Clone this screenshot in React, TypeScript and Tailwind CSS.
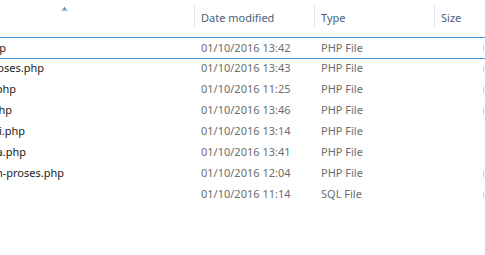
const rows = [
  { name: "index.php", end: "w-[6px]", date: "01/10/2016 13:42", type: "PHP File", size: true, focus: true },
  { name: "proses.php", end: "w-[44px]", date: "01/10/2016 13:43", type: "PHP File", size: true },
  { name: "edit.php", end: "w-[16px]", date: "01/10/2016 11:25", type: "PHP File", size: true },
  { name: "tambah.php", end: "w-[12px]", date: "01/10/2016 13:46", type: "PHP File", size: true },
  { name: "koneksi.php", end: "w-[25px]", date: "01/10/2016 13:14", type: "PHP File", size: false },
  { name: "data.php", end: "w-[26px]", date: "01/10/2016 13:41", type: "PHP File", size: false },
  { name: "tambah-proses.php", end: "w-[64px]", date: "01/10/2016 12:04", type: "PHP File", size: true },
  { name: "", end: "w-[0px]", date: "01/10/2016 11:14", type: "SQL File", size: true },
];

const SortArrow = () => (
  <svg width="7" height="4" viewBox="0 0 7 4" className="block">
    <defs>
      <linearGradient id="sortg" x1="0" y1="0" x2="0" y2="1">
        <stop offset="0" stopColor="#3f5f80" />
        <stop offset="1" stopColor="#a9d5f5" />
      </linearGradient>
    </defs>
    <path d="M3.5 0 L7 4 L0 4 Z" fill="url(#sortg)" />
  </svg>
);

const HeaderCell = ({ label, width }: { label: string; width: string }) => (
  <div className={`${width} flex h-full shrink-0 items-start`}>
    <div className="mt-[5px] h-[22px] w-px bg-[#e3e8ef]" />
    <span className="pl-[6px] pt-[11px] leading-[14px] text-[#4c607a]">{label}</span>
  </div>
);

export default function App() {
  return (
    <div className="h-[255px] w-[485px] overflow-hidden bg-white text-[11px] font-['Noto_Sans',sans-serif]">
      <div className="flex h-[37px]">
        <div className="relative w-[194px] shrink-0">
          <div className="absolute left-[61px] top-[7px]">
            <SortArrow />
          </div>
        </div>
        <HeaderCell label="Date modified" width="w-[120px]" />
        <HeaderCell label="Type" width="w-[120px]" />
        <HeaderCell label="Size" width="w-[51px]" />
      </div>
      <div className="flex flex-col">
        {rows.map((r, i) => (
          <div
            key={i}
            className={`flex items-center whitespace-nowrap ${
              r.focus ? "-mb-px h-[22px] border-y border-[#4a9be6]" : "h-[21px]"
            }`}
          >
            <div className="w-[195px] shrink-0">
              <div className={`${r.end} flex justify-end overflow-hidden text-[#1a1a1a]`}>
                <span>{r.name}</span>
              </div>
            </div>
            <div className="w-[120px] shrink-0 pl-[6px] text-[#6d6d6d]">{r.date}</div>
            <div className="w-[120px] shrink-0 pl-[6px] text-[#6d6d6d]">{r.type}</div>
            <div className="flex w-[50px] shrink-0 justify-end pr-[1px]">
              {r.size && <div className="h-[6px] w-px bg-[#f2c591]" />}
            </div>
          </div>
        ))}
      </div>
    </div>
  );
}
